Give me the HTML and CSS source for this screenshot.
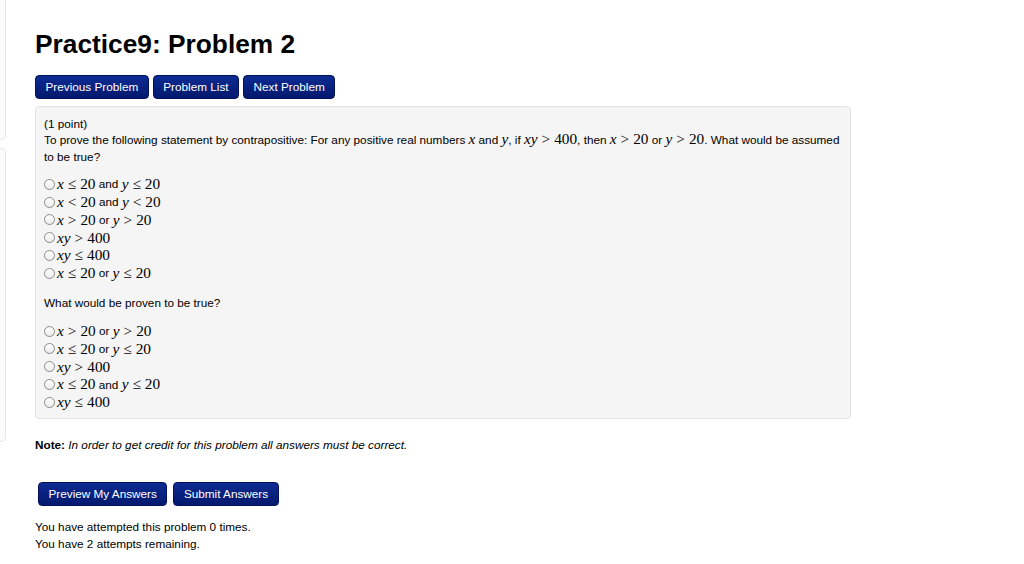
FILE: index.html
```html
<!DOCTYPE html>
<html>
<head>
<meta charset="utf-8">
<link rel="stylesheet" href="styles.css">
</head>
<body>
<div class="layout">
  <aside class="sidebar">
    <div class="panel panel-top"></div>
    <div class="panel panel-mid"></div>
  </aside>
  <main class="main">
    <h1 class="title">Practice9: Problem 2</h1>
    <nav class="nav">
      <button class="btn">Previous Problem</button>
      <button class="btn">Problem List</button>
      <button class="btn">Next Problem</button>
    </nav>
    <section class="problem">
      <p class="line first">(1 point)</p>
      <p class="line">To prove the following statement by contrapositive: For any positive real numbers <span class="m"><i>x</i></span> and <span class="m"><i>y</i></span>, if <span class="m"><i>xy</i><span class="rel">&gt;</span>400</span>, then <span class="m"><i>x</i><span class="rel">&gt;</span>20</span> or <span class="m"><i>y</i><span class="rel">&gt;</span>20</span>. What would be assumed<br>to be true?</p>
      <div class="options">
        <label class="opt"><input type="radio" name="a1"><span class="m"><i>x</i><span class="rel">≤</span>20</span> and <span class="m"><i>y</i><span class="rel">≤</span>20</span></label>
        <label class="opt"><input type="radio" name="a1"><span class="m"><i>x</i><span class="rel">&lt;</span>20</span> and <span class="m"><i>y</i><span class="rel">&lt;</span>20</span></label>
        <label class="opt"><input type="radio" name="a1"><span class="m"><i>x</i><span class="rel">&gt;</span>20</span> or <span class="m"><i>y</i><span class="rel">&gt;</span>20</span></label>
        <label class="opt"><input type="radio" name="a1"><span class="m"><i>xy</i><span class="rel">&gt;</span>400</span></label>
        <label class="opt"><input type="radio" name="a1"><span class="m"><i>xy</i><span class="rel">≤</span>400</span></label>
        <label class="opt"><input type="radio" name="a1"><span class="m"><i>x</i><span class="rel">≤</span>20</span> or <span class="m"><i>y</i><span class="rel">≤</span>20</span></label>
      </div>
      <p class="line question">What would be proven to be true?</p>
      <div class="options second">
        <label class="opt"><input type="radio" name="a2"><span class="m"><i>x</i><span class="rel">&gt;</span>20</span> or <span class="m"><i>y</i><span class="rel">&gt;</span>20</span></label>
        <label class="opt"><input type="radio" name="a2"><span class="m"><i>x</i><span class="rel">≤</span>20</span> or <span class="m"><i>y</i><span class="rel">≤</span>20</span></label>
        <label class="opt"><input type="radio" name="a2"><span class="m"><i>xy</i><span class="rel">&gt;</span>400</span></label>
        <label class="opt"><input type="radio" name="a2"><span class="m"><i>x</i><span class="rel">≤</span>20</span> and <span class="m"><i>y</i><span class="rel">≤</span>20</span></label>
        <label class="opt"><input type="radio" name="a2"><span class="m"><i>xy</i><span class="rel">≤</span>400</span></label>
      </div>
    </section>
    <p class="note"><b>Note:</b> <i>In order to get credit for this problem all answers must be correct.</i></p>
    <div class="actions">
      <button class="btn">Preview My Answers</button>
      <button class="btn">Submit Answers</button>
    </div>
    <p class="attempts">You have attempted this problem 0 times.<br>You have 2 attempts remaining.</p>
  </main>
</div>
</body>
</html>
```

FILE: styles.css
```css
html, body {
  margin: 0;
  padding: 0;
  background: #fff;
}
body {
  font-family: "Liberation Sans", Arial, sans-serif;
  font-size: 11.75px;
  color: #000;
}
.layout {
  display: flex;
  align-items: flex-start;
}
.sidebar {
  width: 6px;
  flex: none;
  display: flex;
  flex-direction: column;
  gap: 8px;
}
.panel {
  width: 5px;
  background: #fcfcfc;
  border: 1px solid #e6e6e6;
  border-left: none;
  border-radius: 0 5px 5px 0;
}
.panel-top {
  height: 139px;
  border-top: none;
  border-top-right-radius: 0;
}
.panel-mid {
  height: 292px;
}
.main {
  margin-left: 29px;
  width: 816px;
  padding-top: 30px;
}
.title {
  margin: 0;
  font-size: 26.3px;
  line-height: 28px;
  font-weight: bold;
}
.nav {
  display: flex;
  gap: 4px;
  margin-top: 17px;
}
.btn {
  font-family: "Liberation Sans", Arial, sans-serif;
  font-size: 11.75px;
  color: #fff;
  height: 24px;
  padding: 0 9.5px;
  border: 1px solid #03115a;
  border-radius: 4px;
  background: linear-gradient(#0d2b92, #04196e);
  line-height: 22px;
}
.problem {
  margin-top: 7px;
  background: #f5f5f5;
  border: 1px solid #e3e3e3;
  border-radius: 4px;
  padding: 8px 8px 7px 8px;
}
.line {
  margin: 0;
  line-height: 17px;
}
.first {
  margin-top: 1px;
  line-height: 15px;
}
.question {
  margin-top: 12px;
}
.options {
  margin-top: 10px;
  display: flex;
  flex-direction: column;
}
.options.second {
  margin-top: 11px;
}
.opt {
  display: flex;
  align-items: center;
  height: 17.8px;
  white-space: pre;
}
.opt input {
  appearance: none;
  -webkit-appearance: none;
  width: 11px;
  height: 11px;
  margin: 1px 2px 0 0;
  border: 1px solid #8a8a8a;
  border-radius: 50%;
  background: linear-gradient(#ffffff, #ececec);
  flex: none;
}
.m {
  font-family: "Liberation Serif", "Times New Roman", serif;
  font-size: 15.3px;
  line-height: 1;
}
.m i {
  font-style: italic;
}
.rel {
  margin: 0 4px;
}
.note {
  margin: 17px 0 0 0;
  line-height: 17px;
}
.actions {
  display: flex;
  gap: 6px;
  margin: 29px 0 0 3px;
}
.attempts {
  margin: 12px 0 0 0;
  line-height: 17px;
}
```
